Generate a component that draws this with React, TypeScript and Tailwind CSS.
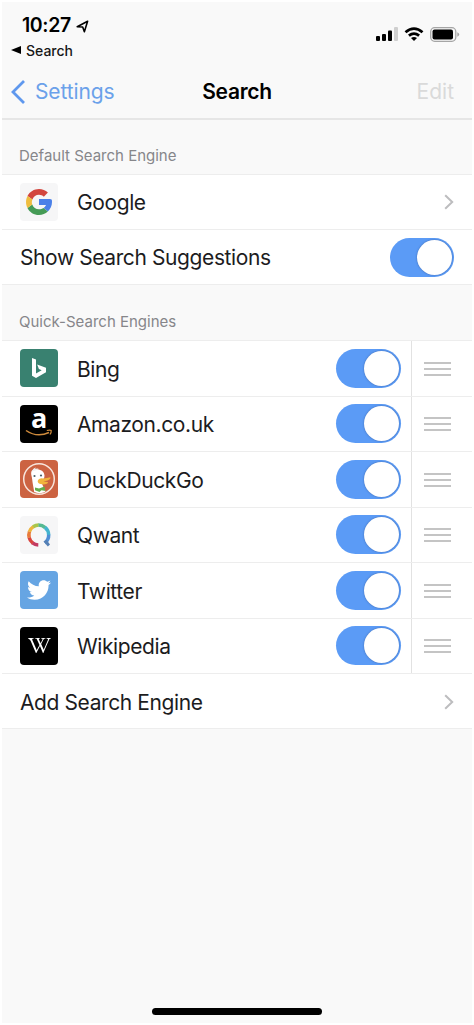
import { useState } from 'react';
import type { ReactNode } from 'react';
import { FaTwitter, FaWikipediaW } from 'react-icons/fa';

type Engine = { name: string; icon: ReactNode };

function GoogleIcon() {
  return (
    <div className="size-[38px] rounded bg-[#f6f6f7] flex items-center justify-center">
      <svg viewBox="4 4 40 40" className="size-[26px]">
        <path fill="#4a80e8" d="M43.6 20.1H42V19.500H24v9h10.800c-.8 2-2.200 3.500-3.700 4.700l6.500 5.600C41.500 35 44 30 44 24c0-1.300-.1-2.600-.4-3.900z" />
        <path fill="#d2463e" d="M6.300 14.700l7.600 5.500C15.500 16 19.400 13 24 13c2.900 0 5.400 1.100 7.400 2.800l6.300-6.300C34 6.100 29.300 4 24 4 16.300 4 9.700 8.300 6.300 14.700z" />
        <path fill="#459b56" d="M24 44c5.200 0 9.900-2 13.600-5.200l-6.700-5.700C29 34.400 26.600 35 24 35c-4.800 0-8.900-3-10.400-7.300l-7.400 5.400C9.500 39.600 16.200 44 24 44z" />
        <path fill="#efbd3f" d="M6.200 33.100l7.400-5.400c-.9-2.500-.9-5 .3-7.500l-7.600-5.500C3.300 20.500 3.300 27.500 6.200 33.100z" />
      </svg>
    </div>
  );
}

function BingIcon() {
  return (
    <div className="size-[38px] rounded bg-[#398170] flex items-center justify-center">
      <svg viewBox="0 0 24 24" className="size-[20px]">
        <path fill="#fff" d="M3.600 0L8.400 1.700v16.900l6.800-3.900-3.300-1.600-2.100-5.200 10.600 3.700v5.500L8.400 24l-4.800-2.700z" />
      </svg>
    </div>
  );
}

function AmazonIcon() {
  return (
    <div className="relative size-[38px] rounded bg-black">
      <span className="absolute inset-x-0 -top-[3px] text-center font-['Open_Sans',sans-serif] text-[27px] leading-[32px] font-bold text-white">a</span>
      <svg viewBox="0 0 38 38" className="absolute inset-0 size-[38px]" fill="none" stroke="#cf8b3c">
        <path d="M6 25.500Q17 33 29 27.500" strokeWidth="1.500" />
        <path d="M26.800 25.500Q30.300 24.700 31.200 25.500Q31.500 27.300 30 29.500" strokeWidth="1.200" />
      </svg>
    </div>
  );
}

function DuckIcon() {
  return (
    <div className="size-[38px] rounded bg-[#cc6342]">
      <svg viewBox="0 0 38 38" className="size-[38px]">
        <circle cx="19" cy="19" r="15.300" fill="none" stroke="#f8e5dc" strokeWidth="1.500" />
        <path fill="#fff" d="M11.200 12.500C11.300 10 13.500 9.300 15.500 9.200C20 8.800 24.300 11 24.500 15.500C24.700 18.500 22.500 20 22 22C21.800 25 25 29 25.500 31.500C22 33.700 17.500 33.500 14.200 32C13.500 27 12.500 23 12.200 19.500C12 16.500 10.800 14.500 11.200 12.500Z" />
        <path fill="#f0f0f0" d="M12 11.500Q13 8 16 7.500L14.800 8.800L18.500 8.500L17 10Z" />
        <circle cx="14.500" cy="16" r="1.100" fill="#4c6169" />
        <circle cx="21" cy="15.500" r="1.100" fill="#4c6169" />
        <path fill="#f1b43c" d="M18 20Q20 17.600 23 18.500Q27 18.300 30.300 17.200Q31 19 27.500 20.500L23.500 21.500Q28.500 21.500 28 23Q25.500 25.200 20.500 24Q16.800 23 18 20Z" />
        <path fill="#65ac4b" d="M15 27.500L19 28.500L24.500 26.500L25.500 31L21.500 30.300L19.500 32L15 30.300Z" />
      </svg>
    </div>
  );
}

// Ring segments, clockwise from the bottom
const QWANT_SEGMENTS = [
  { d: 'M18.3 29A10 10 0 0 1 12.500 26.800', color: '#c33b62' },
  { d: 'M12.800 27A10 10 0 0 1 9.100 21.300', color: '#d9443e' },
  { d: 'M9.200 21.600A10 10 0 0 1 9.500 15.500', color: '#e87a3a' },
  { d: 'M9.400 15.800A10 10 0 0 1 13.400 10.600', color: '#edb43e' },
  { d: 'M13.100 10.800A10 10 0 0 1 18.800 9', color: '#a9c64b' },
  { d: 'M18.500 9A10 10 0 0 1 25.200 11.600', color: '#55b992' },
  { d: 'M25 11.400A10 10 0 0 1 28.700 19', color: '#43b3ce' },
  { d: 'M28.700 18.700A10 10 0 0 1 24.800 26.900', color: '#4f8ed5' },
];

function QwantIcon() {
  return (
    <div className="size-[38px] rounded bg-[#f6f6f7]">
      <svg viewBox="0 0 38 38" className="size-[38px]" fill="none" strokeWidth="3.500">
        {QWANT_SEGMENTS.map((s) => (
          <path key={s.d} d={s.d} stroke={s.color} />
        ))}
        <path d="M23.500 25.500L26.500 23.800L30 28.500L27.800 30.500Z" fill="#5580b5" />
      </svg>
    </div>
  );
}

const ENGINES: Engine[] = [
  { name: 'Bing', icon: <BingIcon /> },
  { name: 'Amazon.co.uk', icon: <AmazonIcon /> },
  { name: 'DuckDuckGo', icon: <DuckIcon /> },
  { name: 'Qwant', icon: <QwantIcon /> },
  {
    name: 'Twitter',
    icon: (
      <div className="size-[38px] rounded bg-[#66a5e3] flex items-center justify-center">
        <FaTwitter className="size-[24px] text-white" />
      </div>
    ),
  },
  {
    name: 'Wikipedia',
    icon: (
      <div className="size-[38px] rounded bg-black flex items-center justify-center">
        <FaWikipediaW className="size-[23px] text-white" />
      </div>
    ),
  },
];

function Toggle({ label }: { label: string }) {
  const [on, setOn] = useState(true);
  return (
    <button
      role="switch"
      aria-checked={on}
      aria-label={label}
      onClick={() => setOn(!on)}
      className={`flex h-[39px] w-[64.500px] shrink-0 items-center rounded-full px-[2px] ${on ? 'justify-end bg-[#5b9bf6]' : 'justify-start bg-[#e5e5ea]'}`}
    >
      <span className="size-[35px] rounded-full bg-white shadow-[0_0_2px_rgba(30,50,100,0.5)]" />
    </button>
  );
}

function Chevron() {
  return (
    <svg viewBox="0 0 10 16" className="h-4 w-2.5" fill="none" stroke="#bdbdbf" strokeWidth="2">
      <path d="M1.200 1.200L8.200 8L1.200 14.800" />
    </svg>
  );
}

function Handle() {
  return (
    <div className="flex h-full w-[61px] items-center border-l border-[#e2e2e2] pt-px pl-[12px]">
      <div className="flex flex-col gap-[4px]">
        <span className="h-[2px] w-[27px] bg-[#c4c4c4]" />
        <span className="h-[2px] w-[27px] bg-[#c4c4c4]" />
        <span className="h-[2px] w-[27px] bg-[#c4c4c4]" />
      </div>
    </div>
  );
}

function StatusBar() {
  return (
    <div className="flex h-[62px] justify-between">
      <div className="pt-[12px] pl-[9px]">
        <div className="flex h-6 items-center pl-[11px]">
          <span className="text-[19.500px] font-semibold tracking-[-0.4px]">10:27</span>
          <svg viewBox="0 0 14 14" className="ml-[5px] size-[13px]" fill="none" stroke="black" strokeWidth="1.700" strokeLinejoin="round">
            <path d="M1.300 7.300L12.500 1.300L9 12.600L7.200 7.600Z" />
          </svg>
        </div>
        <div className="flex h-6 items-center">
          <svg viewBox="0 0 10 8" className="mr-[5px] h-[8px] w-[10px]">
            <path d="M0 4L10 0V8Z" />
          </svg>
          <span className="text-[14px] font-medium text-[#171717]">Search</span>
        </div>
      </div>
      <div className="flex h-[16px] items-center pr-[12px] mt-[24px]">
        <svg viewBox="0 0 22 14" className="h-[14px] w-[22px]">
          <rect x="0" y="9" width="4" height="5" rx="1" />
          <rect x="6" y="7" width="4" height="7" rx="1" />
          <rect x="12" y="3.500" width="4" height="10.500" rx="1" />
          <rect x="18" y="0" width="4" height="14" rx="1" fill="#cfcfcf" />
        </svg>
        <svg viewBox="0 0 20 14" className="ml-[6px] h-[14px] w-[20px]" fill="none" stroke="black" strokeWidth="2.800">
          <path d="M1.500 5.200Q10 -2 18.500 5.200" />
          <path d="M4.900 8.700Q10 4.600 15.100 8.700" />
          <path d="M7 11.100Q10 8.900 13 11.100L10 14Z" fill="black" stroke="none" />
        </svg>
        <svg viewBox="0 0 30 15" className="ml-[6px] h-[15px] w-[30px]">
          <rect x=".700" y=".700" width="25.100" height="13.600" rx="4" fill="none" stroke="#a5a5a5" strokeWidth="1.300" />
          <rect x="2.500" y="2.500" width="20.500" height="10" rx="2" />
          <path d="M27.300 5.300Q29.200 6.200 29.200 7.500Q29.200 8.800 27.300 9.700Z" fill="#a5a5a5" />
        </svg>
      </div>
    </div>
  );
}

export default function App() {
  return (
    <div className="flex h-[1025px] w-[474px] flex-col border-2 border-white bg-[#f9f9f9] font-[Inter,sans-serif] text-[#1c1c1e]">
      <header className="h-[118px] shrink-0 border-b-2 border-[#e6e6e6] text-black">
        <StatusBar />
        <nav className="grid h-[54px] grid-cols-3 items-center pt-px pr-[18px] pl-[9px]">
          <a className="flex items-center text-[21px] tracking-[-0.1px] text-[#6ba1ea]">
            <svg viewBox="0 0 14 24" className="mr-[10px] h-[24px] w-[14px]" fill="none" stroke="#5f98ee" strokeWidth="2.800">
              <path d="M13 1L2 12L13 23" />
            </svg>
            Settings
          </a>
          <h1 className="pl-[9px] text-center text-[21px] font-semibold tracking-[-0.3px]">Search</h1>
          <span className="text-right text-[21px] text-[#dadada]">Edit</span>
        </nav>
      </header>

      <h2 className="flex h-[54px] shrink-0 items-center pt-[19px] pl-[17px] text-[15px] text-[#86868a]">Default Search Engine</h2>
      <section className="shrink-0 border-y border-[#ededed] bg-white text-[21px] tracking-[-0.4px]">
        <div className="flex h-[55px] items-center border-b border-[#ededed] pr-[18px] pl-[18px]">
          <GoogleIcon />
          <span className="ml-[19px] flex-1 pt-[2px]">Google</span>
          <Chevron />
        </div>
        <div className="flex h-[54px] items-center justify-between pr-[18px] pl-[18px]">
          <span className="pt-[2px]">Show Search Suggestions</span>
          <Toggle label="Show Search Suggestions" />
        </div>
      </section>

      <h2 className="flex h-[55px] shrink-0 items-center pt-[20px] pl-[17px] text-[15px] text-[#86868a]">Quick-Search Engines</h2>
      <section className="shrink-0 border-y border-[#ededed] bg-white text-[21px] tracking-[-0.4px]">
        {ENGINES.map((engine) => (
          <div key={engine.name} className="flex h-[55.500px] items-center border-b border-[#ededed] pl-[18px]">
            {engine.icon}
            <span className="ml-[19px] flex-1 pt-[2px]">{engine.name}</span>
            <Toggle label={engine.name} />
            <div className="ml-[10.500px] h-full">
              <Handle />
            </div>
          </div>
        ))}
        <div className="flex h-[54px] items-center justify-between pt-px pr-[18px] pl-[18px]">
          <span className="pt-[2px]">Add Search Engine</span>
          <Chevron />
        </div>
      </section>

      <div className="mx-auto mt-auto mb-[8px] h-[7px] w-[170px] rounded-full bg-black" />
    </div>
  );
}
